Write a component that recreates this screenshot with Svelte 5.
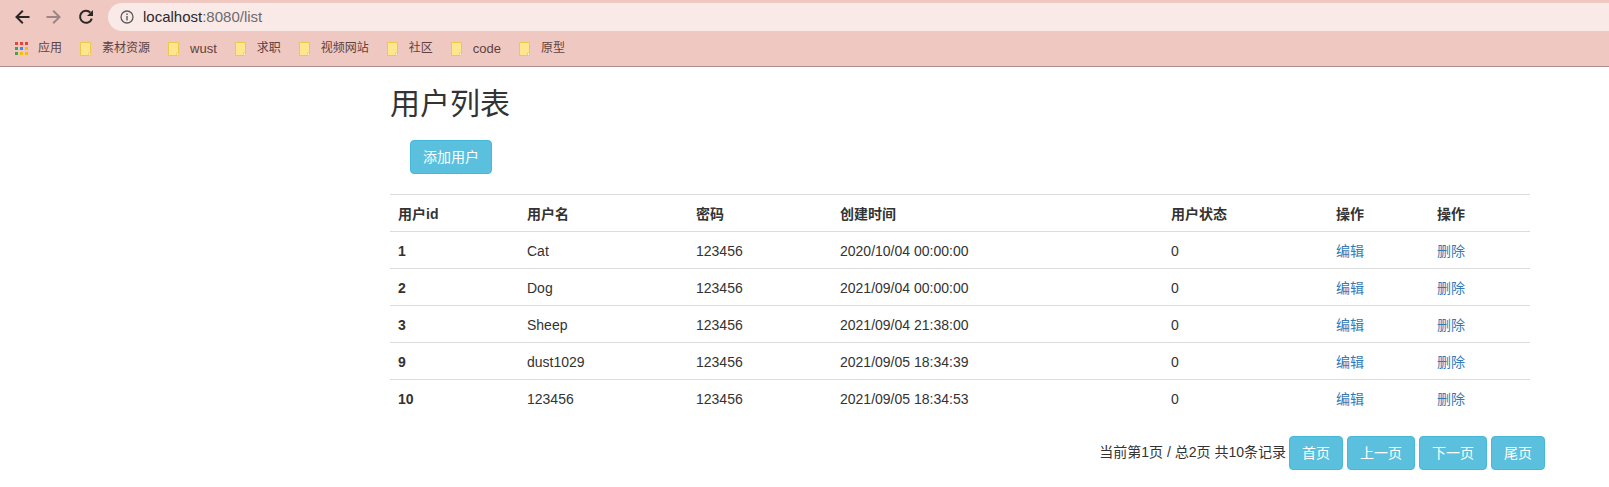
<script>
  const marks = ['素材资源', 'wust', '求职', '视频网站', '社区', 'code', '原型'];
  const rows = [
    [1, 'Cat', '2020/10/04 00:00:00'],
    [2, 'Dog', '2021/09/04 00:00:00'],
    [3, 'Sheep', '2021/09/04 21:38:00'],
    [9, 'dust1029', '2021/09/05 18:34:39'],
    [10, '123456', '2021/09/05 18:34:53']
  ];
  const grid = ['#ea4335','#ea4335','#ea4335','#34a853','#4285f4','#fbbc05','#34a853','#fbbc05','#fbbc05'];
</script>

<div class="chrome">
  <div class="toolbar">
    <svg class="nav first" viewBox="0 0 16 16"><path d="M15.500 8H2.500M8.800 1.800L2.500 8l6.300 6.200" fill="none" stroke="#2b2726" stroke-width="2"/></svg>
    <svg class="nav" viewBox="0 0 16 16"><path d="M.5 8h13M7.200 1.800L13.500 8l-6.300 6.200" fill="none" stroke="#9c8683" stroke-width="2"/></svg>
    <svg class="nav" viewBox="0 0 16 16"><path d="M13.800 9.600A6 6 0 1 1 12.400 3.600" fill="none" stroke="#2b2726" stroke-width="2"/><path d="M15 1v6H9z" fill="#2b2726"/></svg>
    <div class="omni">
      <svg class="info" viewBox="0 0 14 14"><circle cx="7" cy="7" r="6" fill="none" stroke="#5c5a5c" stroke-width="1.3"/><path d="M7 6v4.400M7 3.600v1.500" stroke="#5c5a5c" stroke-width="1.400"/></svg>
      <span class="host">localhost</span><span class="path">:8080/list</span>
    </div>
  </div>
  <div class="bookmarks">
    <span class="mark apps">
      <span class="grid">{#each grid as c}<i style:background={c}></i>{/each}</span>
      <span>应用</span>
    </span>
    {#each marks as m}
      <span class="mark">
        <svg class="folder" viewBox="0 0 11 14"><path d="M.5.5h10v13H.5z" fill="#fee68f" stroke="#edc84c"/><path d="M8.500 11h2v2.500h-2z" fill="#fff" stroke="#edc84c" stroke-width=".8"/></svg>
        <span class:latin={/^[a-z]+$/.test(m)}>{m}</span>
      </span>
    {/each}
  </div>
</div>

<main>
  <h1>用户列表</h1>
  <a class="btn add" href="#add">添加用户</a>
  <table>
    <colgroup>
      <col style:width="129px" /><col style:width="169px" /><col style:width="144px" /><col style:width="331px" /><col style:width="165px" /><col style:width="101px" /><col style:width="101px" />
    </colgroup>
    <thead>
      <tr><th>用户id</th><th>用户名</th><th>密码</th><th>创建时间</th><th>用户状态</th><th>操作</th><th>操作</th></tr>
    </thead>
    <tbody>
      {#each rows as r}
        <tr>
          <th>{r[0]}</th><td>{r[1]}</td><td>123456</td><td>{r[2]}</td><td>0</td>
          <td><a href="#edit">编辑</a></td><td><a href="#del">删除</a></td>
        </tr>
      {/each}
    </tbody>
  </table>
  <div class="pager">
    <span class="count">当前第1页 / 总2页 共10条记录</span>
    <a class="btn" href="#p">首页</a>
    <a class="btn" href="#p">上一页</a>
    <a class="btn" href="#p">下一页</a>
    <a class="btn" href="#p">尾页</a>
  </div>
</main>

<style>
  :global(body) {
    margin: 0;
    background: #fff;
    color: #333;
    font-family: "Liberation Sans", "Noto Sans CJK SC", sans-serif;
    font-size: 14px;
    line-height: 1.42857;
  }
  .chrome {
    height: 66px;
    background: #efc8c1;
    border-bottom: 1px solid #ac8f8b;
  }
  .toolbar {
    height: 32px;
    padding-top: 2px;
    box-sizing: border-box;
    display: flex;
    align-items: center;
  }
  .nav { width: 16px; height: 16px; margin-right: 16px; }
  .nav.first { margin-left: 14px; }
  .omni {
    flex: 1;
    height: 28px;
    margin-left: -2px;
    padding-left: 12px;
    display: flex;
    align-items: center;
    background: #f9e9e7;
    border-radius: 14px 0 0 14px;
    font-size: 15px;
  }
  .info { width: 14px; height: 14px; margin-right: 9px; }
  .host { color: #2a2a2c; }
  .path { color: #6f6b6d; }
  .bookmarks {
    height: 34px;
    display: flex;
    align-items: center;
    padding-left: 15px;
    box-sizing: border-box;
    font-size: 12px;
    color: #5e4240;
  }
  .mark { display: flex; align-items: center; margin-right: 18px; }
  .latin { font-size: 13px; }
  .grid {
    display: grid;
    grid-template-columns: repeat(3, 3px);
    gap: 2px;
    width: 13px;
    margin-right: 10px;
  }
  .grid i { width: 3px; height: 3px; }
  .folder { width: 11px; height: 14px; margin-right: 11px; }
  main {
    width: 1140px;
    margin-left: 390px;
  }
  h1 {
    margin: 16px 0 -1px;
    font-size: 30px;
    font-weight: 400;
    line-height: 42px;
    color: #333;
  }
  .btn {
    display: inline-block;
    box-sizing: border-box;
    height: 34px;
    padding: 6px 12px;
    background: #5bc0de;
    border: 1px solid #46b8da;
    border-radius: 4px;
    color: #fff;
    font-size: 14px;
    line-height: 20px;
    text-decoration: none;
  }
  .add { margin: 16px 0 20px 20px; display: block; width: 82px; }
  table {
    width: 1140px;
    table-layout: fixed;
    border-collapse: collapse;
  }
  th, td {
    padding: 9px 8px 7px;
    box-sizing: content-box;
    border-top: 1px solid #ddd;
    text-align: left;
    line-height: 20px;
    height: 20px;
    font-size: 14px;
  }
  th { font-weight: 700; color: #333; }
  a { color: #337ab7; text-decoration: none; }
  a.btn { color: #fff; }
  .pager {
    display: flex;
    justify-content: flex-end;
    align-items: center;
    gap: 4px;
    margin: 20px -15px 0 0;
  }
  .count { margin-right: -1px; }
</style>
